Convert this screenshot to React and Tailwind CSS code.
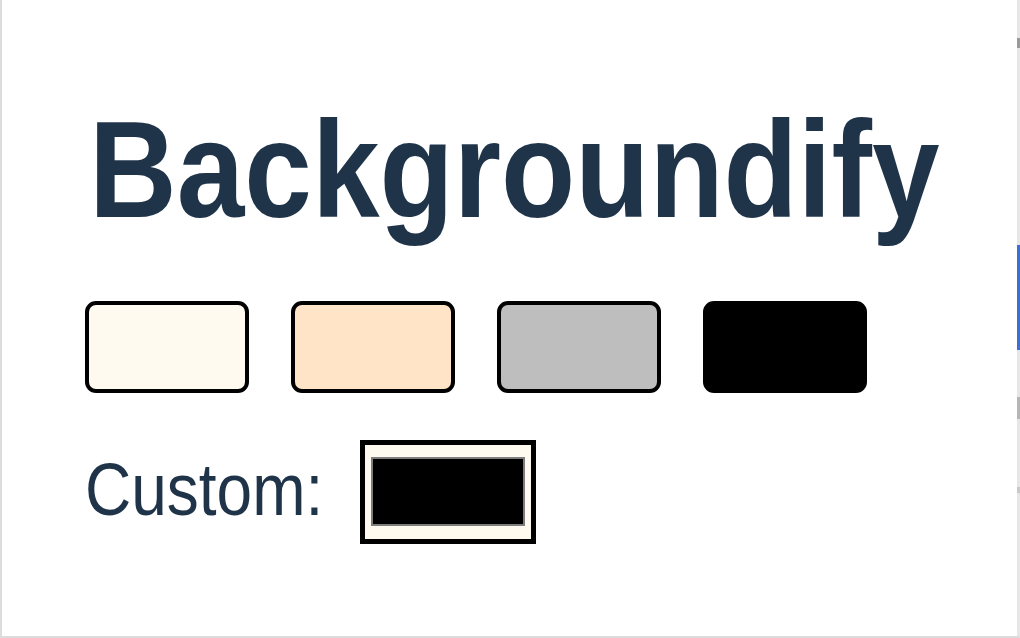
import React from 'react';

// preset background colours shown in the popup
const swatches = [
  { name: 'floralwhite', color: 'bg-[#fffaf0]', border: 'border-black' },
  { name: 'bisque', color: 'bg-[#ffe4c8]', border: 'border-black' },
  { name: 'silver', color: 'bg-[#bebebe]', border: 'border-black' },
  { name: 'black', color: 'bg-black', border: 'border-black' },
];

const font = { fontFamily: '"Liberation Sans", Arial, Helvetica, sans-serif' };

const App = () => {
  return (
    <div className="w-[1020px] h-[638px] flex bg-white border-l-2 border-b-2 border-[#dcdcdc] overflow-hidden" style={font}>
      {/* popup body */}
      <div className="flex-1 pl-[83px] pt-[102px] text-[#1f3349]">
        <div className="h-[120px] pl-[4px]">
          <span className="inline-block text-[121.5px] leading-none font-bold origin-top-left scale-y-[1.13]">
            Backgroundify
          </span>
        </div>

        <div className="mt-[79px] flex gap-[42px]">
          {swatches.map((s) => (
            <div
              key={s.name}
              className={`w-[164px] h-[92px] rounded-[11px] border-4 ${s.border} ${s.color}`}
            />
          ))}
        </div>

        <div className="mt-[47px] flex items-start">
          <span className="mt-[13px] inline-block text-[64px] leading-none origin-top-left scale-y-[1.15]">
            Custom:
          </span>
          <div className="ml-[37px] w-[176px] h-[104px] border-[5px] border-black bg-[#fffaf0] pt-[12px] px-[6px]">
            <div className="h-[69px] bg-black border-2 border-[#7d7d7d]" />
          </div>
        </div>
      </div>

      {/* edge of the page behind the popup */}
      <div className="w-[3px] flex flex-col bg-[#e6e6e6]">
        <div className="h-[38px]" />
        <div className="h-[10px] bg-[#9a9a9a]" />
        <div className="h-[197px]" />
        <div className="h-[105px] bg-[#3f6fd4]" />
        <div className="h-[47px]" />
        <div className="h-[22px] bg-[#b5b5b5]" />
        <div className="h-[68px]" />
        <div className="h-[6px] bg-[#c8c8c8]" />
      </div>
    </div>
  );
};

export default App;
